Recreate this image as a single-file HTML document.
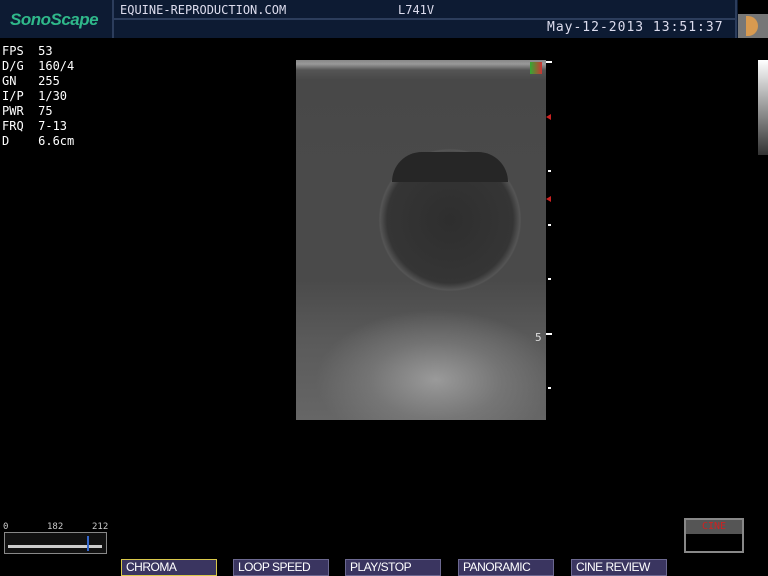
<!DOCTYPE html>
<html><head><style>
*{margin:0;padding:0;box-sizing:border-box}
body{width:768px;height:576px;background:#000;position:relative;overflow:hidden;font-family:"DejaVu Sans Mono","Liberation Mono",monospace;color:#fff}
.a{position:absolute}
.hdr{left:0;top:0;width:738px;height:38px;background:#0d1b33}
.btn{position:absolute;top:559px;height:17px;width:96px;background:#3a3560;border:1px solid #6b6890;color:#fff;font:12px "Liberation Sans",sans-serif;padding-left:4px;line-height:15px;letter-spacing:-.5px}
.info{left:2px;top:44px;font-size:12px;line-height:15px;white-space:pre}
</style></head><body>
<div class="a hdr"></div>
<div class="a" style="left:112px;top:0;width:2px;height:38px;background:#2c3d5c"></div>
<div class="a" style="left:114px;top:18px;width:622px;height:2px;background:#2c3d5c"></div>
<div class="a" style="left:735px;top:0;width:2px;height:38px;background:#2c3d5c"></div>
<div class="a" style="left:10px;top:10px;font:italic bold 17px 'Liberation Sans',sans-serif;color:#2fb88a;letter-spacing:-.5px">SonoScape</div>
<div class="a" style="left:120px;top:3px;font-size:12px;color:#dde">EQUINE-REPRODUCTION.COM</div>
<div class="a" style="left:398px;top:3px;font-size:12px;color:#dde">L741V</div>
<div class="a" style="left:547px;top:20px;font-size:13px;color:#dde;letter-spacing:1px">May-12-2013 13:51:37</div>
<div class="a" style="left:738px;top:14px;width:30px;height:24px;background:#777"></div>
<div class="a" style="left:746px;top:16px;width:12px;height:20px;background:#d89a50;border-radius:0 10px 10px 0"></div>
<div class="a info">FPS  53
D/G  160/4
GN   255
I/P  1/30
PWR  75
FRQ  7-13
D    6.6cm</div>
<div class="a" style="left:296px;top:60px;width:250px;height:360px;background:
radial-gradient(ellipse 70px 70px at 154px 160px,#2e2e2e 0,#353535 90%,#555 100%,transparent 102%),
radial-gradient(ellipse 120px 70px at 140px 320px,#9a9a9a 0,rgba(130,130,130,.6) 55%,transparent 100%),
linear-gradient(#888 0,#999 4px,#555 10px,#484848 20px,#4a4a4a 120px,#4a4a4a 220px,#5a5a5a 280px,#666 360px)"></div>
<div class="a" style="left:392px;top:152px;width:116px;height:30px;background:#262626;border-radius:58px 58px 0 0"></div>
<div class="a" style="left:530px;top:62px;width:12px;height:12px;background:linear-gradient(90deg,#3a3,#c33)"></div>
<div class="a" style="left:546px;top:61px;width:6px;height:2px;background:#fff"></div>
<div class="a" style="left:548px;top:170px;width:3px;height:2px;background:#fff"></div>
<div class="a" style="left:548px;top:224px;width:3px;height:2px;background:#fff"></div>
<div class="a" style="left:548px;top:278px;width:3px;height:2px;background:#fff"></div>
<div class="a" style="left:546px;top:333px;width:6px;height:2px;background:#fff"></div>
<div class="a" style="left:548px;top:387px;width:3px;height:2px;background:#fff"></div>
<div class="a" style="left:546px;top:114px;width:0;height:0;border:3px solid transparent;border-right:5px solid #c22;border-left:0"></div>
<div class="a" style="left:546px;top:196px;width:0;height:0;border:3px solid transparent;border-right:5px solid #c22;border-left:0"></div>
<div class="a" style="left:535px;top:331px;font-size:11px;color:#ddd">5</div>
<div class="a" style="left:758px;top:60px;width:10px;height:95px;background:linear-gradient(#fff,#333)"></div>
<div class="a" style="left:3px;top:522px;font-size:9px;color:#ccc">0</div>
<div class="a" style="left:47px;top:522px;font-size:9px;color:#ccc">182</div>
<div class="a" style="left:92px;top:522px;font-size:9px;color:#ccc">212</div>
<div class="a" style="left:4px;top:532px;width:103px;height:22px;border:1px solid #888;background:#111"></div>
<div class="a" style="left:8px;top:545px;width:94px;height:3px;background:#ccc"></div>
<div class="a" style="left:87px;top:536px;width:2px;height:15px;background:#36c"></div>
<div class="a" style="left:684px;top:518px;width:60px;height:35px;border:2px solid #888;background:#000"></div>
<div class="a" style="left:686px;top:520px;width:56px;height:14px;background:#555;color:#c22;font-size:10px;text-align:center;line-height:14px">CINE</div>
<div class="btn" style="left:121px;border-color:#d8c84a">CHROMA</div>
<div class="btn" style="left:233px">LOOP SPEED</div>
<div class="btn" style="left:345px">PLAY/STOP</div>
<div class="btn" style="left:458px">PANORAMIC</div>
<div class="btn" style="left:571px">CINE REVIEW</div>
</body></html>
